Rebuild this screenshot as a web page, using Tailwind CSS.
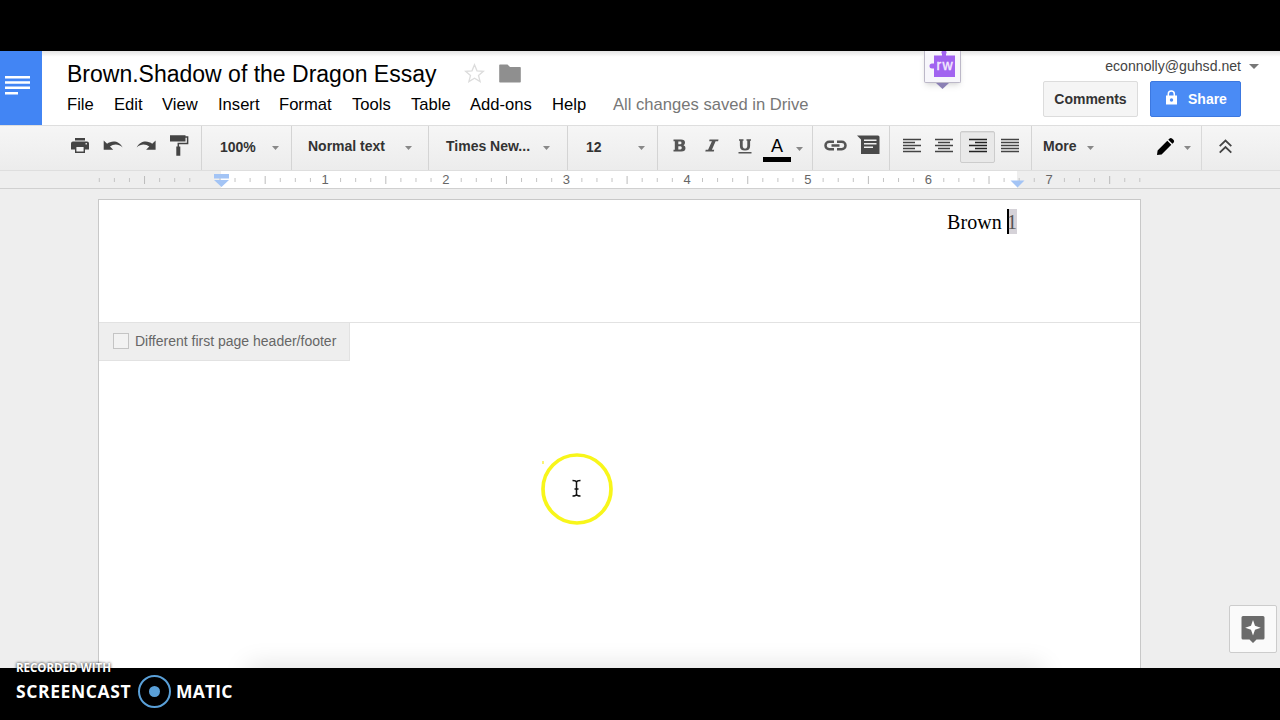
<!DOCTYPE html>
<html lang="en">
  <head>
    <meta charset="UTF-8" />
    <title>Brown.Shadow of the Dragon Essay</title>
    <script src="https://cdn.jsdelivr.net/npm/@tailwindcss/browser@4"></script>
  </head>
  <body
    class="relative flex h-[720px] w-[1280px] flex-col overflow-hidden bg-black font-['Liberation_Sans',sans-serif] text-black"
  >
    <!-- Header -->
    <header class="mt-[51px] flex h-[74px] shrink-0 bg-linear-to-b from-[#e4e4e4] from-0% to-white to-8%">
      <div class="h-[74px] w-[42px] bg-[#4285f4] pt-[25px] pl-[5px]">
        <svg width="25" height="19" fill="#fff">
          <path d="M0 0h25v2.5H0zM0 5.3h25v2.5H0zM0 10.6h25v2.5H0zM0 15.9h13v2.5H0z" />
        </svg>
      </div>

      <div class="flex flex-1 flex-col pl-[25px]">
        <div class="flex h-[38px] items-center pt-[7px]">
          <h1 class="w-[397px] text-[23px] leading-7 whitespace-nowrap">Brown.Shadow of the Dragon Essay</h1>
          <svg class="mb-[2px]" width="21" height="20" viewBox="0 0 21 20" fill="none" stroke="#dcdcdc" stroke-width="1.300">
            <path d="M10.500 1.800l2.500 6 6.400.5-4.900 4.100 1.600 6.200-5.600-3.400-5.600 3.400 1.600-6.200-4.900-4.100 6.400-.5z" />
          </svg>
          <svg class="ml-[14px]" width="22" height="19" fill="#8f8f8f">
            <path d="M1 .5h7.500l2.500 2.500h10q.8 0 .8.800v13.900q0 .8-.8.800H1q-.8 0-.8-.800V1.300q0-.8.800-.800z" />
          </svg>
        </div>
        <nav class="flex h-[32px] items-center text-[16.600px] whitespace-nowrap">
          <span class="w-[47px]">File</span>
          <span class="w-[48px]">Edit</span>
          <span class="w-[56px]">View</span>
          <span class="w-[61px]">Insert</span>
          <span class="w-[73px]">Format</span>
          <span class="w-[59px]">Tools</span>
          <span class="w-[59px]">Table</span>
          <span class="w-[82px]">Add-ons</span>
          <span class="w-[61px]">Help</span>
          <span class="text-[#777]">All changes saved in Drive</span>
        </nav>
      </div>

      <div class="flex w-[237px] flex-col pr-[21px]">
        <div class="flex h-[31px] items-center justify-end gap-2 text-[14.100px] text-[#444]">
          econnolly@guhsd.net
          <svg width="10" height="5" fill="#777"><path d="M0 0h10L5 5z" /></svg>
        </div>
        <div class="flex justify-end gap-3 pr-[18px] text-sm font-bold">
          <div
            class="-mt-px flex h-9 w-[95px] items-center justify-center rounded-xs border border-[#dcdcdc] bg-[#f5f5f5] text-[#333]"
          >
            Comments
          </div>
          <div
            class="-mt-px flex h-9 w-[91px] items-center gap-[10px] rounded-xs border border-[#3c78e0] bg-[#4a8bf5] pl-[14px] text-white"
          >
            <svg class="mb-[3px]" width="13" height="15" viewBox="0 0 13 15">
              <path d="M3.300 6V4a3 3 0 016 0v2" fill="none" stroke="#fff" stroke-width="1.500" />
              <path d="M1 5.500h11v9H1z" fill="#fff" />
              <circle cx="6.500" cy="10" r="1.700" fill="#4a8bf5" />
            </svg>
            Share
          </div>
        </div>
      </div>
    </header>

    <!-- Toolbar -->
    <div
      class="flex h-[46px] shrink-0 items-stretch border-y border-[#dedede] bg-linear-to-b from-[#f6f6f6] to-[#ececec] text-sm font-bold text-[#333]"
    >
      <div class="flex w-[202px] border-r border-[#d4d4d4] pt-[9px] pl-[70px]">
        <svg width="20" height="22" viewBox="0 0 20 22" fill="#444">
          <path d="M5 3h10v2.500H5zM3 6.500h14q2 0 2 2v6h-4v-3H5v3H1v-6q0-2 2-2z" />
          <path d="M5.700 11.200h8.600v6.100H5.700z" fill="#f2f2f2" stroke="#444" stroke-width="1.400" />
          <path d="M15.500 8.100h1.500v1.300h-1.500z" fill="#ddd" />
        </svg>
        <svg class="ml-[13px]" width="20" height="22" viewBox="0 0 20 22" fill="#444">
          <path d="M.7 5.500l3.400 3.200C8 5.500 16 4.800 19.600 12.500 15.500 8.700 10.500 8.900 7 11.600l3.200 3.200H.7z" />
        </svg>
        <svg class="ml-[13px]" width="20" height="22" viewBox="0 0 20 22" fill="#444">
          <path d="M19.600 5.500l-3.400 3.200C12.300 5.500 4.300 4.800.7 12.500c4.100-3.800 9.100-3.600 12.600-.900l-3.200 3.200h9.500z" />
        </svg>
        <svg class="ml-[13px]" width="20" height="22" viewBox="0 0 20 22" fill="#444">
          <path d="M1 .2h15.500v6.300H1zM7.300 11.500h4v9.200h-4z" />
          <path d="M16 2.100h2.600v6.300H9.300v3.500" fill="none" stroke="#444" stroke-width="1.500" />
        </svg>
      </div>
      <div class="flex w-[90px] items-center justify-between border-r border-[#d4d4d4] pr-3 pb-[2px] pl-[18px]">
        100%
        <svg class="mt-px" width="7" height="4" fill="#888"><path d="M0 0h7L3.500 4z" /></svg>
      </div>
      <div class="flex w-[137px] items-center justify-between border-r border-[#d4d4d4] pr-4 pb-[4px] pl-4">
        Normal text
        <svg class="mt-[3px]" width="7" height="4" fill="#888"><path d="M0 0h7L3.500 4z" /></svg>
      </div>
      <div class="flex w-[139px] items-center justify-between border-r border-[#d4d4d4] pr-[17px] pb-[4px] pl-[17px]">
        Times New...
        <svg class="mt-[3px]" width="7" height="4" fill="#888"><path d="M0 0h7L3.500 4z" /></svg>
      </div>
      <div class="flex w-[90px] items-center justify-between border-r border-[#d4d4d4] pr-3 pb-[2px] pl-[18px]">
        12
        <svg class="mt-px" width="7" height="4" fill="#888"><path d="M0 0h7L3.500 4z" /></svg>
      </div>
      <div class="flex w-[155px] border-r border-[#d4d4d4] pt-[9px] pl-[15px]">
        <svg width="13" height="22" viewBox="0 0 13 22" fill="#555">
          <path
            fill-rule="evenodd"
            d="M.5 4.500H8q4 0 4 3.200 0 1.800-1.500 2.500 2 .7 2 2.800 0 3.500-4.200 3.500H.5v-1.800h1.300V6.300H.5zM5.300 6.500v2.800h1.900q1.300 0 1.300-1.400T7.200 6.500zM5.300 11.300v3.100h2.100q1.400 0 1.400-1.600t-1.400-1.500z"
          />
        </svg>
        <svg class="ml-[19px]" width="14" height="22" viewBox="0 0 14 22" fill="#555">
          <path d="M4.500 4.500h9l-.4 1.700h-2.500L6.900 14.800h2.300l-.4 1.700H.3l.4-1.700h2.400l3.800-8.600H4.200z" />
        </svg>
        <svg class="ml-[19px]" width="14" height="22" viewBox="0 0 14 22" fill="#555">
          <path d="M1 4.300h4.500v1.500h-.8v4.900q0 2.800 2.300 2.800t2.300-2.800V5.800h-.8V4.300H13v1.500h-.9v5.100q0 4.600-5.100 4.600T1.900 10.900V5.800H1zM.5 17h13v1.400H.5z" />
        </svg>
        <div class="ml-[11px] flex w-[28px] flex-col items-center text-[18px] leading-[22px] font-normal text-black">
          A
          <div class="h-[5px] w-[28px] bg-black"></div>
        </div>
        <svg class="mt-[12px] ml-[5px]" width="7" height="4" fill="#888"><path d="M0 0h7L3.500 4z" /></svg>
      </div>
      <div class="flex w-[77px] border-r border-[#d4d4d4] pt-[8px] pl-[11px]">
        <svg width="23" height="24" viewBox="0 0 23 24" fill="none" stroke="#555" stroke-width="2.500">
          <path d="M10 7.800H5.200a3.700 3.700 0 000 7.400H10M13 7.800h4.800a3.700 3.700 0 010 7.400H13M7.500 11.500h8" />
        </svg>
        <svg class="ml-[10px]" width="24" height="22" viewBox="0 0 24 22">
          <path d="M0 1.500h21q1.500 0 1.500 1.500v17H4V5.500z" fill="#4a4a4a" />
          <path d="M7 6.200h12.500M7 9.700h12.500M7 13.200h9" stroke="#f0f0f0" stroke-width="1.500" />
        </svg>
      </div>
      <div class="flex w-[142px] items-center border-r border-[#d4d4d4] pb-[3px] pl-[5px]">
        <div class="flex w-[33px] justify-center pb-px">
          <svg width="18" height="16" stroke="#444" stroke-width="1.300">
            <path d="M0 1.500h18M0 4.500h12M0 7.500h18M0 10.500h12M0 13.500h18" />
          </svg>
        </div>
        <div class="flex w-[32px] justify-center pb-px">
          <svg width="18" height="16" stroke="#444" stroke-width="1.300">
            <path d="M0 1.500h18M3 4.500h12M0 7.500h18M3 10.500h12M0 13.500h18" />
          </svg>
        </div>
        <div
          class="flex h-8 w-[35px] items-center justify-center rounded-xs border border-[#ccc] bg-[#e9e9e9] pb-px inset-shadow-2xs"
        >
          <svg width="18" height="16" stroke="#222" stroke-width="1.400">
            <path d="M0 1.500h18M6 4.500h12M0 7.500h18M6 10.500h12M0 13.500h18" />
          </svg>
        </div>
        <div class="flex w-[30px] justify-center pb-px">
          <svg width="18" height="16" stroke="#444" stroke-width="1.300">
            <path d="M0 1.500h18M0 4.500h18M0 7.500h18M0 10.500h18M0 13.500h18" />
          </svg>
        </div>
      </div>
      <div class="flex w-[170px] items-center border-r border-[#d9d9d9] pb-[4px] pl-[11px]">
        <span class="w-[44px]">More</span>
        <svg class="mt-[3px]" width="7" height="4" fill="#888"><path d="M0 0h7L3.500 4z" /></svg>
        <svg class="ml-[62px]" width="19" height="19" viewBox="0 0 19 19">
          <path d="M1 18l.6-4.600L11.300 3.700l4 4L5.600 17.400zM12.300 2.700l1.300-1.300q1.200-1 2.400 0l1.700 1.700q.9 1.200 0 2.300l-1.300 1.300z" />
        </svg>
        <svg class="mt-[3px] ml-[9px]" width="7" height="4" fill="#888"><path d="M0 0h7L3.500 4z" /></svg>
      </div>
      <div class="flex items-center pb-[3px] pl-[17px]">
        <svg width="13" height="15" fill="none" stroke="#444" stroke-width="1.800">
          <path d="M.7 7.200L6.500 1.500l5.800 5.700M.7 13.700L6.500 8l5.800 5.700" />
        </svg>
      </div>
    </div>

    <!-- Ruler -->
    <div class="h-[18px] shrink-0 border-b border-[#d0d0d0] bg-[#eee]">
      <svg id="ruler" class="block" width="1280" height="17" font-size="13" fill="#666">
        <rect x="221" y="0" width="796" height="17" fill="#fff" />
      </svg>
    </div>

    <!-- Document -->
    <main class="h-[479px] shrink-0 bg-[#eee] pt-[10px] pl-[98px]">
      <div class="flex h-[469px] w-[1043px] flex-col border border-b-0 border-[#c8c8c8] bg-white">
        <div
          class="flex h-[123px] shrink-0 justify-end border-b border-[#e2e2e2] pt-[9px] pr-[123px] font-['Liberation_Serif',serif] text-[20px] leading-[26px]"
        >
          <span class="tracking-[0.1px]">Brown&nbsp;</span>
          <span class="flex h-[25px] w-[10px] justify-end border-l-2 border-black bg-[#d5d2d8] text-[#555]">1</span>
        </div>
        <div
          class="flex h-[38px] w-[251px] shrink-0 items-center gap-[6px] border-r border-b border-[#e2e2e2] bg-[#eee] pb-px pl-[14px] text-sm whitespace-nowrap text-[#666]"
        >
          <span class="size-4 border border-[#c4c4c4] bg-[#f2f2f2]"></span>
          Different first page header/footer
        </div>
        <!-- shade rising from the bottom edge -->
        <div class="mt-auto flex h-[38px] justify-center overflow-hidden pt-[38px] pl-[50px]">
          <div class="h-5 w-[790px] shrink-0 shadow-[0_0_26px_2px_#00000020]"></div>
        </div>
      </div>
    </main>

    <!-- Recorder watermark -->
    <footer class="relative h-[52px] text-white">
      <div
        class="absolute -top-[7px] left-4 font-['Open_Sans',sans-serif] text-[11.500px] leading-[14px] font-bold whitespace-nowrap text-shadow-[0_0_3px_#000]"
      >
        RECORDED WITH
      </div>
      <div
        class="flex h-[47px] items-center pl-4 font-['Open_Sans',sans-serif] text-[17.500px] font-bold tracking-[0.6px] whitespace-nowrap"
      >
        <span class="w-[121px]">SCREENCAST</span>
        <svg width="35" height="35">
          <circle cx="17.500" cy="17.500" r="15.500" fill="none" stroke="#5aa0d8" stroke-width="2" />
          <circle cx="17.500" cy="17.500" r="5.500" fill="#5aa0d8" />
        </svg>
        <span class="ml-1 tracking-[0.2px]">MATIC</span>
      </div>
    </footer>

    <!-- Add-on tab hanging from the top edge -->
    <div
      class="absolute top-[51px] left-[924px] h-[32px] w-[37px] rounded-b-xs border border-t-0 border-[#bcb8c8] bg-[#f7f6fb] shadow-md"
    >
      <svg class="absolute top-0 left-0" width="36" height="40">
        <path d="M9 4.500h8V3a2.500 2.500 0 114 0v1.500h9V26H9v-8.500H7a2.500 2.500 0 110-5h2z" fill="#a163f0" />
        <path d="M11 32h13l-6.500 6z" fill="#8a7fb4" />
        <text x="11.500" y="18.500" font-size="14" fill="#f3eaff" stroke="#f3eaff" stroke-width=".4" textLength="16">rw</text>
      </svg>
    </div>

    <!-- Explore button -->
    <div
      class="absolute top-[605px] left-[1229px] flex h-12 w-12 items-center justify-center rounded-xs border border-[#ccc] bg-[#fafafa]"
    >
      <svg width="24" height="27" viewBox="0 0 24 27">
        <path d="M2 0h20q1.500 0 1.500 1.500V22q0 1.500-1.500 1.500h-6.500L12 27l-3.500-3.500H2Q.5 23.500.5 22V1.500Q.5 0 2 0z" fill="#6b6b6b" />
        <path d="M12 4l2 5.800 5.800 2-5.800 2-2 5.800-2-5.800-5.800-2 5.800-2z" fill="#fff" />
      </svg>
    </div>

    <!-- Mouse pointer with highlight ring -->
    <svg class="absolute top-[450px] left-[538px]" width="78" height="78">
      <circle cx="39" cy="39" r="34" fill="none" stroke="#f8f61a" stroke-width="3.700" />
      <path d="M5 11v3" stroke="#f8f04a" stroke-width="1.500" />
      <path
        d="M34.500 30.500q3.500 0 4 1.500 .5-1.500 4-1.500M34.500 46q3.500 0 4-1.500 .5 1.500 4 1.500M38.500 32v13M36.500 39h4"
        fill="none"
        stroke="#111"
        stroke-width="1.500"
      />
    </svg>

    <script>
      const ruler = document.getElementById('ruler');
      const start = 99.3;
      const step = 15.08; // an eighth of an inch

      let marks = '';
      for (let i = 0; i < 70; i++) {
        const x = start + i * step;
        if (i % 8 === 7) {
          const inch = (i - 7) / 8;
          if (inch > 0) {
            marks += `<text x="${x - 0.3}" y="13" text-anchor="middle">${inch}</text>`;
          }
        } else if (i % 8 === 3) {
          marks += `<path d="M${x} 5v8" stroke="#bbb" />`;
        } else {
          marks += `<path d="M${x} 7v4" stroke="#c4c4c4" />`;
        }
      }

      // Indent markers
      marks += '<path d="M214 3h15v4.500h-15zM214 9h15l-7.500 7z" fill="#a3c4f5" />';
      marks += '<path d="M1010.500 9.500h14l-7 7z" fill="#a3c4f5" />';
      ruler.innerHTML += marks;
    </script>
  </body>
</html>
